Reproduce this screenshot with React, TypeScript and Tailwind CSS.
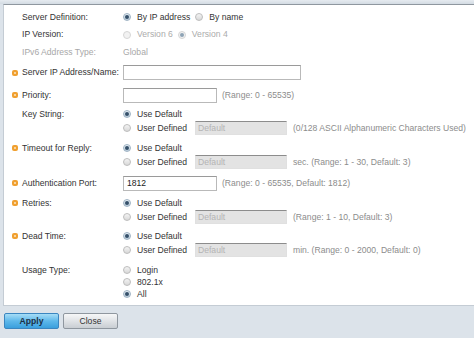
import type { ReactNode } from "react";

function Radio({ checked = false, disabled = false }: { checked?: boolean; disabled?: boolean }) {
  return (
    <span
      className={
        "flex h-[8px] w-[8px] shrink-0 items-center justify-center rounded-full border " +
        (disabled
          ? "border-[#d6d6d6] bg-[#f2f2f2]"
          : checked
          ? "border-[#9fb3c4] bg-gradient-to-b from-[#e8f0f6] to-[#b9cbd9]"
          : "border-[#bdbdbd] bg-gradient-to-b from-[#f4f4f4] to-[#d8d8d8]")
      }
    >
      {checked && (
        <span
          className={
            "h-[4px] w-[4px] rounded-full " + (disabled ? "bg-[#8ea3b5]" : "bg-[#35506a]")
          }
        />
      )}
    </span>
  );
}

function Bullet() {
  return (
    <span className="flex h-[6px] w-[6px] shrink-0 items-center justify-center rounded-[2px] bg-[#f0a030]">
      <span className="h-[2px] w-[2px] rounded-[1px] bg-[#fde6c2]" />
    </span>
  );
}

function Label({ text, req = false, muted = false }: { text: string; req?: boolean; muted?: boolean }) {
  return (
    <div className="flex w-[119px] shrink-0 items-center pl-[8px]">
      <span className="flex w-[10px] shrink-0">{req && <Bullet />}</span>
      <span className={muted ? "text-[#a8a8a8]" : "text-[#333]"}>{text}</span>
    </div>
  );
}

function Opt({ checked = false, label, children }: { checked?: boolean; label: string; children?: ReactNode }) {
  return (
    <div className="flex h-[14px] items-center">
      <Radio checked={checked} />
      <span className="ml-[6px] w-[58px] text-[#333]">{label}</span>
      {children}
    </div>
  );
}

function Disabled({ hint }: { hint: string }) {
  return (
    <>
      <div className="flex h-[14px] w-[92px] items-center border border-[#e0e0e0] border-t-[#8c8c8c] bg-[#e3e3e3] pl-[2px] text-[#b4b4b4]">
        Default
      </div>
      <span className="ml-[6px] text-[#8c8c8c]">{hint}</span>
    </>
  );
}

function DefaultGroup({ label, req, hint, pt, pb }: { label: string; req?: boolean; hint: string; pt: string; pb: string }) {
  return (
    <div className={"flex " + pt + " " + pb}>
      <div className="flex h-[14px] items-center">
        <Label text={label} req={req} />
      </div>
      <div className="flex flex-col">
        <Opt checked label="Use Default" />
        <Opt label="User Defined">
          <Disabled hint={hint} />
        </Opt>
      </div>
    </div>
  );
}

function TextBox({ w, value = "" }: { w: string; value?: string }) {
  return (
    <div className={"flex h-[15px] items-center border border-[#b9b9b9] border-t-[#9a9a9a] bg-white pl-[3px] text-[#222] " + w}>
      {value}
    </div>
  );
}

export default function App() {
  return (
    <div
      className="flex h-[338px] w-[474px] flex-col overflow-hidden bg-[#dce3ea] text-[8.6px] leading-none"
      style={{ fontFamily: '"Liberation Sans", Arial, sans-serif' }}
    >
      <div className="h-[4px] shrink-0 bg-gradient-to-b from-[#e6ebf0] to-[#d3dbe3]" />
      <div className="ml-[3px] flex h-[302px] shrink-0 flex-col border-t border-b border-l border-[#c4ccd4] border-t-[#8f979f] bg-white pt-[3px]">
        {/* Server Definition */}
        <div className="flex h-[18px] items-center">
          <Label text="Server Definition:" />
          <Radio checked />
          <span className="ml-[6px] text-[#333]">By IP address</span>
          <span className="ml-[5px]">
            <Radio />
          </span>
          <span className="ml-[6px] text-[#333]">By name</span>
        </div>

        {/* IP Version */}
        <div className="flex h-[17px] items-center">
          <Label text="IP Version:" />
          <Radio disabled />
          <span className="ml-[6px] text-[#ababab]">Version 6</span>
          <span className="ml-[5px]">
            <Radio checked disabled />
          </span>
          <span className="ml-[6px] text-[#ababab]">Version 4</span>
        </div>

        {/* IPv6 Address Type */}
        <div className="flex h-[18px] items-center">
          <Label text="IPv6 Address Type:" muted />
          <span className="text-[#a8a8a8]">Global</span>
        </div>

        {/* Server IP */}
        <div className="flex h-[23px] items-center">
          <Label text="Server IP Address/Name:" req />
          <TextBox w="w-[178px]" />
        </div>

        {/* Priority */}
        <div className="flex h-[22px] items-center">
          <Label text="Priority:" req />
          <TextBox w="w-[94px]" />
          <span className="ml-[5px] text-[#8c8c8c]">(Range: 0 - 65535)</span>
        </div>

        <DefaultGroup label="Key String:" hint="(0/128 ASCII Alphanumeric Characters Used)" pt="pt-[1px]" pb="pb-[4px]" />
        <DefaultGroup label="Timeout for Reply:" req hint="sec. (Range: 1 - 30, Default: 3)" pt="pt-[2px]" pb="pb-[3px]" />

        {/* Authentication Port */}
        <div className="flex h-[22px] items-center">
          <Label text="Authentication Port:" req />
          <TextBox w="w-[94px]" value="1812" />
          <span className="ml-[5px] text-[#8c8c8c]">(Range: 0 - 65535, Default: 1812)</span>
        </div>

        <DefaultGroup label="Retries:" req hint="(Range: 1 - 10, Default: 3)" pt="pt-[2px]" pb="pb-[3px]" />
        <DefaultGroup label="Dead Time:" req hint="min. (Range: 0 - 2000, Default: 0)" pt="pt-[2px]" pb="pb-[4px]" />

        {/* Usage Type */}
        <div className="flex pt-[3px]">
          <div className="flex h-[12px] items-center">
            <Label text="Usage Type:" />
          </div>
          <div className="flex flex-col">
            {[
              ["Login", false],
              ["802.1x", false],
              ["All", true],
            ].map(([t, c]) => (
              <div key={t as string} className="flex h-[12px] items-center">
                <Radio checked={c as boolean} />
                <span className="ml-[6px] text-[#333]">{t as string}</span>
              </div>
            ))}
          </div>
        </div>
      </div>

      {/* Buttons */}
      <div className="mt-[7px] flex gap-[4px] pl-[4px]">
        <button className="flex h-[16px] w-[55px] items-center justify-center rounded-[2px] border border-[#3b86c0] bg-gradient-to-b from-[#a6ddf6] via-[#5db8ea] to-[#3a9fdd] font-bold text-[#1d2f45]">
          Apply
        </button>
        <button className="flex h-[16px] w-[55px] items-center justify-center rounded-[2px] border border-[#8f979f] bg-gradient-to-b from-[#f6f7f8] via-[#e0e3e6] to-[#c9ced3] text-[#333]">
          Close
        </button>
      </div>
    </div>
  );
}
